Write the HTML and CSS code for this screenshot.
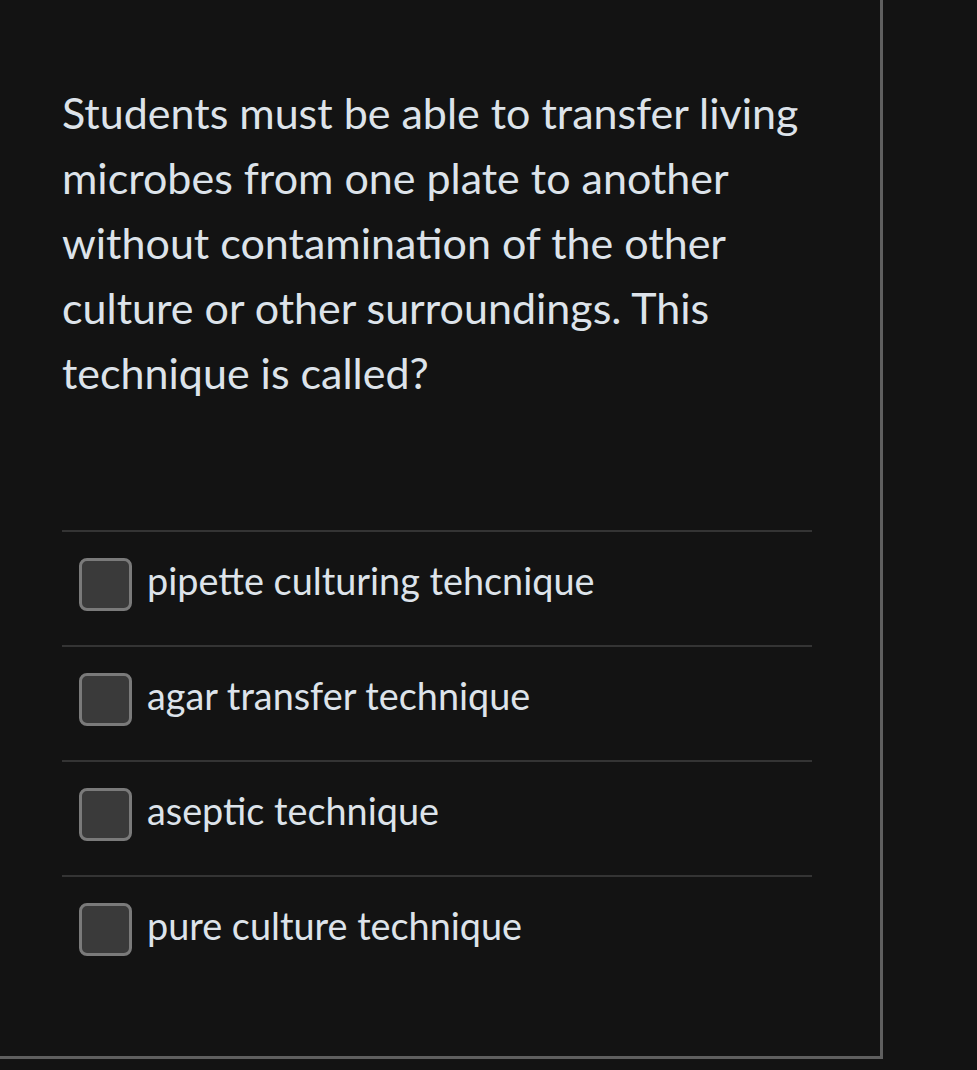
FILE: index.html
```html
<!DOCTYPE html>
<html lang="en">
<head>
<meta charset="utf-8">
<title>Quiz question</title>
<link rel="stylesheet" href="styles.css">
</head>
<body>
<div class="panel">
  <div class="question">
    <p class="prompt">Students must be able to transfer living microbes from one plate to another without contamination of the other culture or other surroundings. This technique is called?</p>
    <ul class="answers">
      <li class="answer"><span class="box"></span><span class="label">pipette culturing tehcnique</span></li>
      <li class="answer"><span class="box"></span><span class="label">agar transfer technique</span></li>
      <li class="answer"><span class="box"></span><span class="label">aseptic technique</span></li>
      <li class="answer"><span class="box"></span><span class="label">pure culture technique</span></li>
    </ul>
  </div>
</div>
</body>
</html>
```
FILE: styles.css
```css
html, body {
  margin: 0;
  padding: 0;
  background: #131313;
}
body {
  font-family: Lato, "Open Sans", sans-serif;
  color: #dde3ea;
}
.panel {
  width: 880px;
  height: 1056px;
  border-right: 3px solid #5f5f5f;
  border-bottom: 3px solid #5f5f5f;
  background: #131313;
}
.question {
  padding: 80px 0 0 62px;
  width: 750px;
}
.prompt {
  margin: 0;
  font-size: 43px;
  line-height: 65px;
  width: 750px;
}
.answers {
  list-style: none;
  margin: 125px 0 0;
  padding: 0;
}
.answer {
  display: flex;
  align-items: flex-start;
  height: 87px;
  padding: 26px 0 0 17px;
  border-top: 2px solid #343434;
}
.box {
  width: 47px;
  height: 47px;
  border: 3px solid #7a7a7a;
  border-radius: 8px;
  background: #3a3a3a;
  flex: none;
}
.label {
  margin-left: 15px;
  font-size: 37.8px;
  line-height: 1.2;
}
```
